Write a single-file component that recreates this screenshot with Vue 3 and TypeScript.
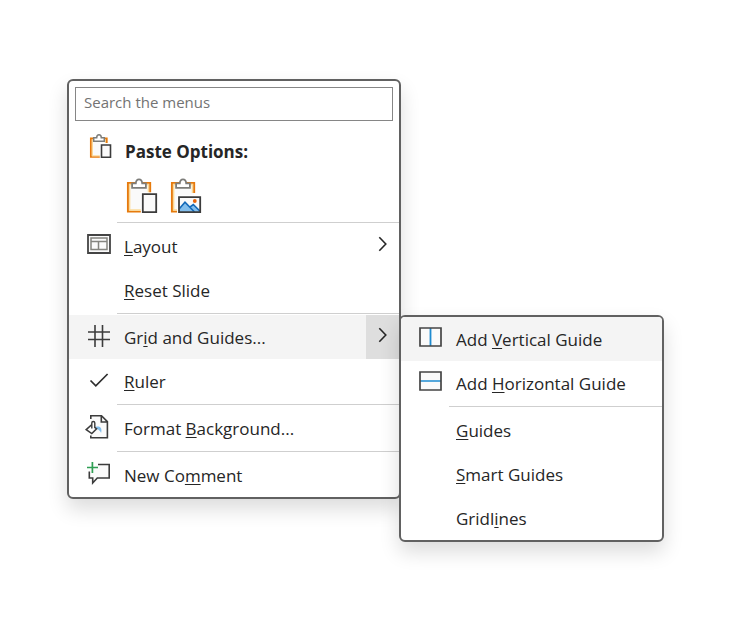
<script setup lang="ts">
import { ref } from 'vue'

interface Entry {
  kind: 'item' | 'separator'
  id: string
  pre?: string
  key?: string
  post?: string
  icon?: string
  arrow?: boolean
}

const query = ref('')

const item = (id: string, pre: string, key: string, post: string, icon = '', arrow = false): Entry => ({
  kind: 'item', id, pre, key, post, icon, arrow,
})
const separator = (id: string): Entry => ({ kind: 'separator', id })

const entries: Entry[] = [
  separator('s1'),
  item('layout', '', 'L', 'ayout', 'layout', true),
  item('reset', '', 'R', 'eset Slide'),
  separator('s2'),
  item('grid', 'Gr', 'i', 'd and Guides...', 'grid', true),
  item('ruler', '', 'R', 'uler', 'check'),
  separator('s3'),
  item('format', 'Format ', 'B', 'ackground...', 'format'),
  separator('s4'),
  item('comment', 'New Co', 'm', 'ment', 'comment'),
]

const subEntries: Entry[] = [
  item('vertical', 'Add ', 'V', 'ertical Guide', 'vertical'),
  item('horizontal', 'Add ', 'H', 'orizontal Guide', 'horizontal'),
  separator('s5'),
  item('guides', '', 'G', 'uides'),
  item('smart', '', 'S', 'mart Guides'),
  item('gridlines', 'Gridl', 'i', 'nes'),
]
</script>

<template>
  <main class="page">
    <nav class="menu" aria-label="Slide menu">
      <div class="search">
        <input v-model="query" type="text" placeholder="Search the menus" aria-label="Search the menus" />
      </div>
      <div class="heading">
        <svg class="icon" viewBox="0 0 24 24" fill="none" aria-hidden="true">
          <path d="M4 4.500h16v18.500H4z" fill="#fafafa" />
          <path d="M5.300 22V5.800h13.200V9" stroke="#fbd893" stroke-width="1.300" />
          <path d="M13 23H3.800V4.400h16V9" stroke="#e67a0c" stroke-width="1.700" />
          <path d="M13 21.800H5" stroke="#fbd893" stroke-width="1" />
          <path d="M6.700 7.300V3.800h3c.1-4 4.500-4 4.600 0h3v3.500z" fill="#fff" stroke="#7d7d7a" stroke-width="1.500" />
          <path d="M12.800 9.200h12v15h-12z" fill="#fff" />
          <path d="M14.500 11h9v12.200h-9z" fill="#fafafa" stroke="#3c3c3c" stroke-width="1.600" />
        </svg>
        <span class="label">Paste Options:</span>
      </div>
      <div class="paste-row">
        <button v-for="kind in ['document', 'picture']" :key="kind" type="button" class="paste" :aria-label="'Paste ' + kind">
          <svg class="paste-icon" viewBox="0 0 32 36" fill="none" aria-hidden="true">
            <path d="M2 5h22v29H2z" fill="#fafafa" />
            <path d="M3.600 33V6.500h18.900V15" stroke="#fbd893" stroke-width="1.500" />
            <path d="M16 33.600H1.900V4.900H24.200V15" stroke="#e67a0c" stroke-width="1.900" />
            <path d="M16 32H3" stroke="#fbd893" stroke-width="1.400" />
            <path d="M6.100 9.800V5.400h3.700c.4-5.400 6-5.400 6.400 0h3.700v4.400z" fill="#fff" stroke="#7d7d7a" stroke-width="1.800" />
            <template v-if="kind === 'document'">
              <path d="M14.800 14.300h17.200V36H14.800z" fill="#fff" />
              <path d="M16.800 16.200h13.400v18H16.800z" fill="#fafafa" stroke="#3c3c3c" stroke-width="1.800" />
            </template>
            <template v-else>
              <path d="M7 17.200h25V36H7z" fill="#fff" />
              <path d="M9 19.200h21.200v15H9z" fill="#fafafa" />
              <path d="M9.500 30.500l5.500-6 9 9.500H9.500z" fill="#83beec" />
              <path d="M19.500 29.500l4-3 6.500 6V34h-6z" fill="#83beec" />
              <path d="M9.500 30.500l5.500-6.300 9.500 9.800M19.800 29.200l3.500-2.700 6.500 6.500" stroke="#1268b8" stroke-width="1.600" />
              <circle cx="24.800" cy="23" r="1.900" fill="#e8650c" />
              <path d="M9 19.200h21.200v15H9z" stroke="#3c3c3c" stroke-width="1.800" />
            </template>
          </svg>
        </button>
      </div>

      <ul class="list">
        <li v-for="entry in entries" :key="entry.id" class="entry" :class="{ open: entry.id === 'grid' }">
          <hr v-if="entry.kind === 'separator'" class="separator" />
          <button v-else type="button" class="row">
            <svg class="icon" viewBox="0 0 24 24" fill="none" aria-hidden="true">
              <template v-if="entry.icon === 'layout'">
                <path d="M1 3h22v18H1z" fill="#fafafa" stroke="#444" stroke-width="1.800" />
                <path d="M4 6h16v11.500H4zM4 9.500h16M11.500 9.500v8" stroke="#858580" stroke-width="1.500" />
              </template>
              <path v-else-if="entry.icon === 'grid'" d="M8 2v22M15.500 2v22M1 9h22M1 16.500h22" stroke="#3c3c3c" stroke-width="1.600" />
              <path v-else-if="entry.icon === 'check'" d="M3.500 13.500l5.300 5.300L20.600 7" stroke="#2e2e2e" stroke-width="1.700" />
              <template v-else-if="entry.icon === 'format'">
                <path d="M3.800 1.700h10.700l5.900 6v16.100H3.800z" fill="#fafafa" />
                <path d="M3.800 5V1.700h10.700l5.900 6v16.100H3.800v-2.300M14.300 2v6h6" stroke="#3c3c3c" stroke-width="1.600" />
                <path d="M8.500 13c4.500-1.500 7 1 5.600 6-.9-2-2.300-3.500-4.300-4z" fill="#83beec" />
                <path d="M-.8 15.600L4.400 11l5.200 3.800-4.800 4.700z" fill="#fff" stroke="#3c3c3c" stroke-width="1.500" />
                <path d="M4.800 14.500V9c0-2 3-2 3 0v5" fill="#fff" stroke="#3c3c3c" stroke-width="1.400" />
              </template>
              <template v-else-if="entry.icon === 'comment'">
                <path d="M11 3.500h11.200V17H10l-4.200 5v-5H2.300V9z" fill="#fafafa" />
                <path d="M11 3.500h11.200V17H10.300l-4.600 5v-5H2.300V10.500" stroke="#3c3c3c" stroke-width="1.600" />
                <path d="M5.400 1v11M0 6.500h11" stroke="#2f9e53" stroke-width="1.700" />
              </template>
            </svg>
            <span class="label">{{ entry.pre }}<u>{{ entry.key }}</u>{{ entry.post }}</span>
            <span v-if="entry.arrow" class="arrow">
              <svg class="chevron" viewBox="0 0 10 16" fill="none" aria-hidden="true">
                <path d="M1.300 1.300L7.800 8l-6.500 6.700" stroke="#262626" stroke-width="1.600" />
              </svg>
            </span>
          </button>

          <ul v-if="entry.id === 'grid'" class="list submenu">
            <li v-for="sub in subEntries" :key="sub.id" :class="{ hovered: sub.id === 'vertical' }">
              <hr v-if="sub.kind === 'separator'" class="separator" />
              <button v-else type="button" class="row">
                <svg class="icon" viewBox="0 0 24 24" fill="none" aria-hidden="true">
                  <template v-if="sub.icon">
                    <path d="M1 3h21v18H1z" fill="#fafafa" />
                    <path v-if="sub.icon === 'vertical'" d="M11.500 3v18" stroke="#1e8bd0" stroke-width="1.800" />
                    <path v-else d="M1 12h21" stroke="#1e8bd0" stroke-width="1.600" />
                    <path d="M1 3h21v18H1z" stroke="#444" stroke-width="1.700" />
                  </template>
                </svg>
                <span class="label">{{ sub.pre }}<u>{{ sub.key }}</u>{{ sub.post }}</span>
              </button>
            </li>
          </ul>
        </li>
      </ul>
    </nav>
  </main>
</template>

<style>
body {
  margin: 0;
  background: #fff;
}
</style>

<style scoped>
* {
  box-sizing: border-box;
}

.page {
  padding: 79px 67px;
  font-family: "Segoe UI", "Open Sans", "Noto Sans", sans-serif;
  font-size: 17px;
  line-height: 24px;
  color: #262626;
}

.menu,
.submenu {
  border: 2px solid #616161;
  border-radius: 6px;
  background: #fff;
  box-shadow: 0 10px 20px rgba(0, 0, 0, 0.14);
}

.menu {
  width: 100%;
  max-width: 334px;
}

.search {
  padding: 6px 6px 8px;
}

.search input {
  display: block;
  width: 100%;
  height: 34px;
  padding: 0 8px 4px;
  border: 1px solid #868686;
  border-radius: 0;
  outline: none;
  background: #fff;
  font: inherit;
  font-size: 15px;
  color: #262626;
}

.search input::placeholder {
  color: #737373;
  opacity: 1;
}

.heading,
.row {
  display: flex;
  align-items: center;
  width: 100%;
  height: 44px;
  padding: 0 0 0 18px;
}

.row {
  border: 0;
  background: transparent;
  font: inherit;
  color: inherit;
  text-align: left;
}

.heading {
  font-weight: 700;
}

.icon {
  flex: none;
  width: 24px;
  height: 24px;
  margin: 0 13px 4px 0;
  overflow: visible;
}

.heading .icon {
  margin: 0 14px 10px 0;
}

.label {
  flex: 1;
  padding-top: 2px;
  white-space: nowrap;
}

u {
  text-decoration-thickness: 1px;
  text-underline-offset: 2px;
  text-decoration-skip-ink: none;
}

.paste-row {
  display: flex;
  gap: 12px;
  height: 48px;
  padding: 5px 0 0 57px;
}

.paste {
  width: 32px;
  height: 36px;
  padding: 0;
  border: 0;
  background: transparent;
}

.paste-icon {
  display: block;
  width: 32px;
  height: 36px;
}

.list {
  margin: 0;
  padding: 0;
  list-style: none;
}

.entry {
  position: relative;
}

.separator {
  height: 1px;
  margin: 0 0 0 48px;
  border: 0;
  background: #cfcfcf;
}

li:has(> .separator) {
  padding: 1px 0;
}

.open > .row,
.hovered {
  background: #f4f4f4;
}

.arrow {
  display: flex;
  align-items: center;
  justify-content: center;
  width: 33px;
  height: 44px;
  padding-bottom: 4px;
}

.open .arrow {
  background: #dedede;
}

.chevron {
  width: 10px;
  height: 16px;
}

.submenu {
  position: absolute;
  top: 0;
  left: 100%;
  z-index: 1;
  width: 265px;
  overflow: hidden;
}
</style>
